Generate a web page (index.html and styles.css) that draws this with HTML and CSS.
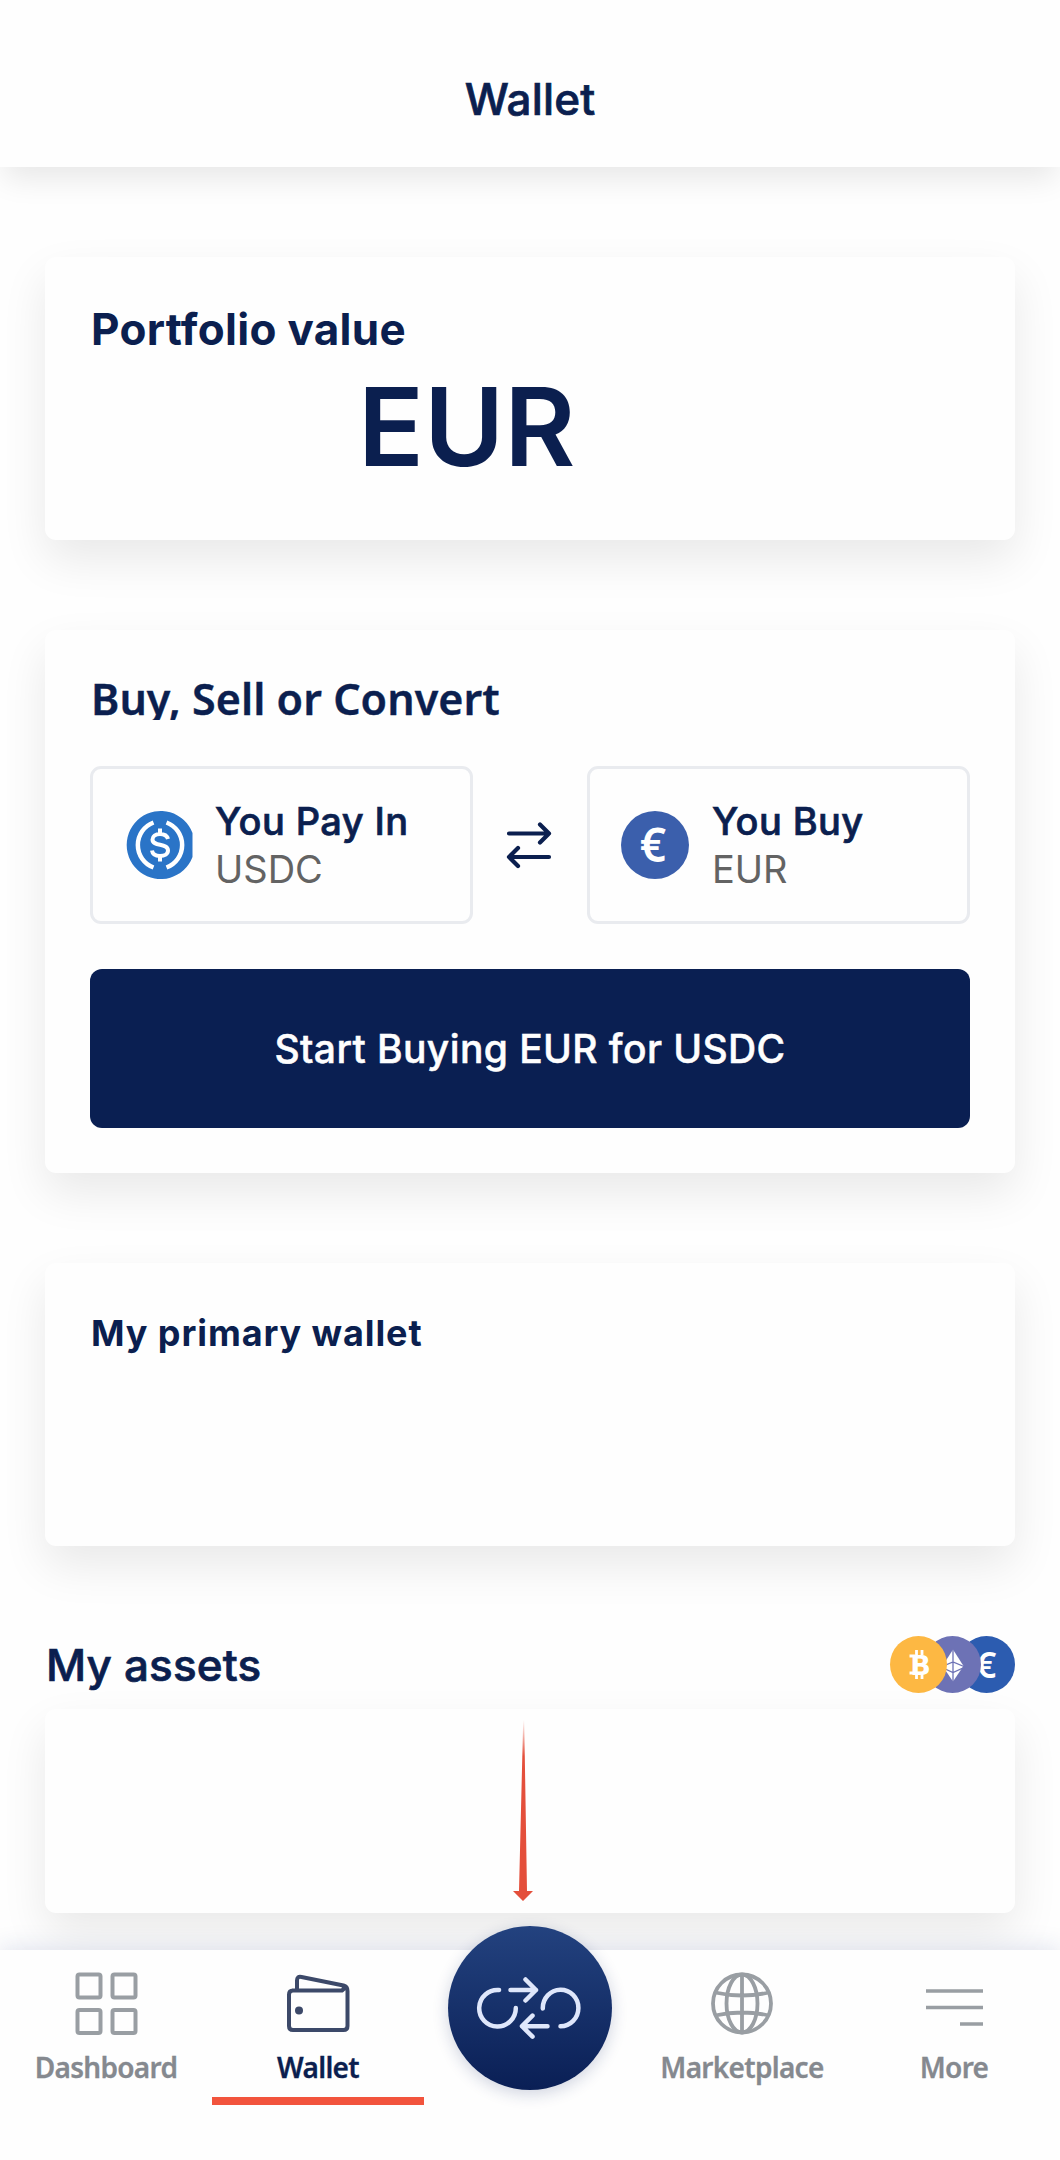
FILE: index.html
```html
<!DOCTYPE html>
<html lang="en">
<head>
<meta charset="utf-8">
<title>Wallet</title>
<link rel="stylesheet" href="styles.css">
</head>
<body>
<div class="app">
  <header class="header"><h1 class="header-title">Wallet</h1></header>

  <main class="main">
    <section class="card portfolio">
      <h2 class="portfolio-title">Portfolio value</h2>
      <p class="portfolio-value">EUR</p>
    </section>

    <section class="card trade">
      <h2 class="trade-title">Buy, Sell or Convert</h2>
      <div class="pair">
        <div class="asset">
          <svg class="asset-icon" viewBox="0 0 68 68">
            <path d="M66.500 22V46A34 34 0 1 1 66.500 22Z" fill="#2a74c7"/>
            <path d="M27.500 11.500A24 24 0 0 0 27.500 56.500M40.500 11.500A24 24 0 0 1 40.500 56.500" fill="none" stroke="#fff" stroke-width="4.500"/>
            <path d="M34 17.500V23M34 45V50.500M42 28C41 24.500 38 23 34 23C29.500 23 26.500 25.200 26.500 28.500C26.500 36 42 31.500 42 39.500C42 43 38.500 45 34 45C29.500 45 26.500 43 26 39.500" fill="none" stroke="#fff" stroke-width="4"/>
          </svg>
          <div class="asset-text">
            <span class="asset-label">You Pay In</span>
            <span class="asset-code">USDC</span>
          </div>
        </div>
        <svg class="swap" viewBox="0 0 46 46">
          <path d="M3 11.500H43M34 2.500L43 11.500L34 20.500M43 35H3M12 26L3 35L12 44" fill="none" stroke="#0b1f4f" stroke-width="4.200" stroke-linecap="round" stroke-linejoin="round"/>
        </svg>
        <div class="asset">
          <svg class="asset-icon" viewBox="0 0 68 68">
            <circle cx="33" cy="34" r="34" fill="#3b5fac"/>
            <text class="euro" x="31" y="50.500" text-anchor="middle">€</text>
          </svg>
          <div class="asset-text">
            <span class="asset-label">You Buy</span>
            <span class="asset-code">EUR</span>
          </div>
        </div>
      </div>
      <button class="primary">Start Buying EUR for USDC</button>
    </section>

    <section class="card wallet"><h2 class="wallet-title">My primary wallet</h2></section>

    <section class="assets">
      <div class="assets-head">
        <h2 class="assets-title">My assets</h2>
        <svg class="coins" viewBox="0 0 125 57">
          <circle cx="96.500" cy="28.500" r="28.500" fill="#2c5cb0"/>
          <text class="coin-euro" x="96" y="41.500" text-anchor="middle">€</text>
          <circle cx="62.500" cy="28.500" r="28.500" fill="#6d72b5"/>
          <path d="M63 13.500L73.500 30L63 45.500L52.500 30Z" fill="#fff"/>
          <path d="M63 13V46M51 31L63 26L75 31L63 36.500Z" fill="none" stroke="#6d72b5" stroke-width="1.300"/>
          <circle cx="28.500" cy="28.500" r="28.500" fill="#fdb843"/>
          <text class="coin-btc" x="30.500" y="38.500" text-anchor="middle">B</text>
          <path d="M19.500 20H25M19.500 37H25" stroke="#fff" stroke-width="3"/>
          <path d="M26.500 14V19M32 14V19M26.500 38V43M32 38V43" stroke="#fff" stroke-width="2.800"/>
        </svg>
      </div>
      <div class="card assets-card">
        <svg class="pointer" viewBox="0 0 20 182">
          <defs><linearGradient id="fade" x1="0" y1="0" x2="0" y2="1"><stop offset="0" stop-color="#e44f3b" stop-opacity="0"/><stop offset=".2" stop-color="#e44f3b"/></linearGradient></defs>
          <path d="M10.200 0H11.200L14 171H20L10 181L0 171H6Z" fill="url(#fade)"/>
        </svg>
      </div>
    </section>
  </main>

  <nav class="nav">
    <a class="tab">
      <svg class="tab-icon" viewBox="0 0 64 64" fill="none" stroke="#999ea3" stroke-width="4">
        <rect x="3.500" y="2.500" width="23" height="23" rx="2"/><rect x="38.500" y="2.500" width="23" height="23" rx="2"/>
        <rect x="3.500" y="38" width="23" height="23" rx="2"/><rect x="38.500" y="38" width="23" height="23" rx="2"/>
      </svg>
      <span class="tab-label">Dashboard</span>
    </a>
    <a class="tab active">
      <svg class="tab-icon" viewBox="0 0 64 64" fill="none" stroke="#3c4969" stroke-width="4" stroke-linejoin="round">
        <path d="M6 18.500H56A4 4 0 0 0 57.500 13.500L15.500 5Q11 4 11 8.500V18.500M57.500 13.500Q61.500 14.500 61.500 19V54Q61.500 58 57.500 58H7Q3 58 3 54V22.500Q3 18.500 7 18.500"/>
        <circle cx="13" cy="38.500" r="4" fill="#3c4969" stroke="none"/>
      </svg>
      <span class="tab-label">Wallet</span>
    </a>
    <a class="tab exchange">
      <span class="exchange-disc">
        <svg class="exchange-icon" viewBox="448 1926 164 164" fill="none" stroke="#dfe7fb" stroke-width="4.500" stroke-linecap="round" stroke-linejoin="round">
          <path d="M499 1990A18.300 18.300 0 1 0 515.800 2008M542.800 2008.500A17.800 18.300 0 1 1 560.500 2026.300M510.500 1990H536M525.500 1979.500L536 1990L525.500 2000.500M547.500 2026.200H522M532.500 2015.700L522 2026.200L532.500 2036.700"/>
        </svg>
      </span>
    </a>
    <a class="tab">
      <svg class="tab-icon" viewBox="0 0 64 64" fill="none" stroke="#999ea3" stroke-width="3.800">
        <circle cx="32" cy="31.500" r="29"/><ellipse cx="32" cy="31.500" rx="15.500" ry="29"/>
        <path d="M32 2V61M5 20.500Q32 26.500 59 20.500M5 43.500Q32 37.500 59 43.500"/>
      </svg>
      <span class="tab-label">Marketplace</span>
    </a>
    <a class="tab">
      <svg class="tab-icon" viewBox="0 0 64 64" fill="none" stroke="#999ea3" stroke-width="3.500">
        <path d="M4 19H61M4 35.500H61M38 52H61"/>
      </svg>
      <span class="tab-label">More</span>
    </a>
  </nav>
</div>
</body>
</html>
```
FILE: styles.css
```css
* { box-sizing: border-box; }
body { margin: 0; background: #fefefe; color: #0b1f4f; font-family: Inter, sans-serif; }
h1, h2, p { margin: 0; font-weight: 600; }
svg { display: block; overflow: visible; flex: none; }

.app { display: flex; flex-direction: column; width: 1060px; height: 2160px; overflow: hidden; }

.header { flex: none; height: 167px; padding-top: 73px; background: #fefefe; text-align: center; box-shadow: 0 16px 28px -4px rgba(0, 0, 0, .09); }
.header-title, .assets-title { font-size: 44px; line-height: 52px; font-weight: 500; letter-spacing: .15px; -webkit-text-stroke: .7px currentColor; }

.main { flex: 1; display: flex; flex-direction: column; gap: 90px; padding: 90px 45px 0; }
.card { border-radius: 11px; background: #fefefe; box-shadow: 0 20px 46px rgba(0, 0, 0, .085); }

.portfolio { height: 283px; padding: 46px 46px 0; }
.portfolio-title { font-size: 44px; line-height: 52px; font-weight: 700; letter-spacing: .3px; }
.portfolio-value { margin: 16px 0 0 267px; font-size: 109px; line-height: 110px; font-weight: 600; }

.trade { padding: 45px; }
.trade-title { height: 45px; margin-bottom: 46px; padding-left: 1px; overflow: hidden; font: 600 43px/47px "Noto Sans", sans-serif; letter-spacing: .05px; -webkit-text-stroke: .4px currentColor; }
.pair { display: grid; grid-template-columns: 383px 1fr 382px; align-items: center; height: 158px; margin-bottom: 45px; }
.asset { display: flex; align-items: center; gap: 22px; height: 158px; padding-left: 32px; border: 3px solid #e9ebef; border-radius: 11px; }
.asset:first-child { padding-left: 33px; gap: 21px; }
.asset:last-child { margin-left: -1px; }
.asset-icon { width: 68px; height: 68px; }
.asset-text { display: flex; flex-direction: column; font-size: 38px; line-height: 48px; }
.asset-label { font-weight: 500; letter-spacing: .4px; -webkit-text-stroke: .7px currentColor; }
.asset-code { color: #636363; }
.swap { width: 46px; height: 46px; margin-left: 33px; }
.euro { font: 600 46px "Noto Sans", sans-serif; fill: #fff; }
.primary { display: block; width: 100%; height: 159px; padding: 0; border: 0; border-radius: 12px; background: #0a1f52; color: #fefefe; font: 500 39px/48px Inter, sans-serif; letter-spacing: .4px; -webkit-text-stroke: .5px currentColor; }

.wallet { height: 283px; padding: 48px 46px 0; }
.wallet-title { font-size: 36px; line-height: 44px; font-weight: 700; letter-spacing: .9px; }

.assets { display: flex; flex-direction: column; gap: 16px; }
.assets-head { display: flex; align-items: center; justify-content: space-between; height: 57px; }
.assets-title { padding-left: 1px; }
.coins { width: 125px; height: 57px; }
.coin-euro { font: 600 36px "Noto Sans", sans-serif; fill: #fff; }
.coin-btc { font: bold 27px "DejaVu Sans", sans-serif; fill: #fff; }
.assets-card { height: 204px; padding: 11px 0 0 468px; }
.pointer { width: 20px; height: 182px; }

.nav { position: relative; flex: none; display: grid; grid-template-columns: repeat(5, 212px); height: 210px; background: #fefefe; box-shadow: 0 -3px 22px rgba(30, 55, 130, .13); }
.tab { display: flex; flex-direction: column; align-items: center; height: 155px; padding-top: 22px; color: #85898f; }
.tab-icon { width: 64px; height: 64px; }
.tab-label { margin-top: 13px; font: 600 28px/36px "Noto Sans", sans-serif; letter-spacing: -.7px; -webkit-text-stroke: .3px currentColor; }
.active { border-bottom: 8px solid #f2543d; color: #0b1f4f; }
.exchange { padding-top: 0; }
.exchange-disc { width: 164px; height: 164px; margin-top: -24px; border-radius: 50%; background: linear-gradient(#23427f, #0a1f55); box-shadow: 0 4px 16px rgba(20, 40, 100, .2); }
.exchange-icon { width: 164px; height: 164px; }
```
